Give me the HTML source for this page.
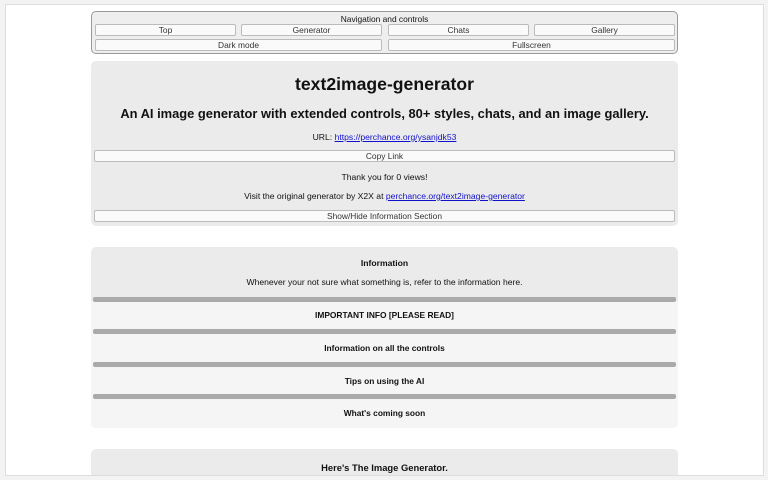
<!DOCTYPE html>
<html><head><meta charset="utf-8"><style>
*{box-sizing:border-box;margin:0;padding:0}
body{width:768px;height:480px;overflow:hidden;background:#f3f3f3;font-family:"Liberation Sans",sans-serif;color:#111;position:relative}
#frame{position:absolute;left:5px;top:4px;width:759px;height:472px;background:#fff;border:1px solid #ddd;overflow:hidden}
.box{position:absolute;left:85px;width:587px;background:#ebebeb;border-radius:5px}
.btn{position:absolute;height:12px;background:#fafafa;border:1px solid #bbb;border-radius:2px;font-size:8.4px;line-height:10px;text-align:center;color:#333}
.t{position:absolute;left:0;width:100%;text-align:center;white-space:nowrap}
a{color:#11c}
.bar{position:absolute;left:2px;width:583px;height:5px;background:#aaa;border-radius:2px}
.item{position:absolute;left:0;width:587px;background:#f5f5f5;font-weight:bold;font-size:8.4px;text-align:center}
</style></head><body>
<div id="frame">
<div class="box" style="top:6px;height:43px;border:1px solid #999;background:#eee">
 <div class="t" style="top:2px;font-size:8.4px">Navigation and controls</div>
 <div class="btn" style="left:3px;top:12px;width:141px">Top</div>
 <div class="btn" style="left:149px;top:12px;width:141px">Generator</div>
 <div class="btn" style="left:296px;top:12px;width:141px">Chats</div>
 <div class="btn" style="left:442px;top:12px;width:141px">Gallery</div>
 <div class="btn" style="left:3px;top:27px;width:287px">Dark mode</div>
 <div class="btn" style="left:296px;top:27px;width:287px">Fullscreen</div>
</div>
<div class="box" style="top:56px;height:165px">
 <div class="t" style="top:13px;font-size:17.6px;font-weight:bold">text2image-generator</div>
 <div class="t" style="top:45px;font-size:12.9px;font-weight:bold">An AI image generator with extended controls, 80+ styles, chats, and an image gallery.</div>
 <div class="t" style="top:71px;font-size:8.6px">URL: <a href="#">https://perchance.org/ysanjdk53</a></div>
 <div class="btn" style="left:3px;top:89px;width:581px">Copy Link</div>
 <div class="t" style="top:111px;font-size:8.6px">Thank you for 0 views!</div>
 <div class="t" style="top:130px;font-size:8.6px">Visit the original generator by X2X at <a href="#">perchance.org/text2image-generator</a></div>
 <div class="btn" style="left:3px;top:149px;width:581px">Show/Hide Information Section</div>
</div>
<div class="box" style="top:242px;height:181px;overflow:hidden">
 <div class="t" style="top:11px;font-size:8.6px;font-weight:bold">Information</div>
 <div class="t" style="top:30px;font-size:8.6px">Whenever your not sure what something is, refer to the information here.</div>
 <div class="item" style="top:54px;height:32px;line-height:21px;padding-top:4px">IMPORTANT INFO [PLEASE READ]</div>
 <div class="item" style="top:86px;height:33px;padding-top:4px;line-height:23px">Information on all the controls</div>
 <div class="item" style="top:119px;height:32px;padding-top:4px;line-height:23px">Tips on using the AI</div>
 <div class="item" style="top:151px;height:30px;padding-top:4px;line-height:23px">What's coming soon</div>
 <div class="bar" style="top:50px"></div>
 <div class="bar" style="top:82px"></div>
 <div class="bar" style="top:115px"></div>
 <div class="bar" style="top:147px"></div>
</div>
<div class="box" style="top:444px;height:40px">
 <div class="t" style="top:13px;font-size:9.4px;font-weight:bold">Here's The Image Generator.</div>
</div>
</div>
</body></html>
